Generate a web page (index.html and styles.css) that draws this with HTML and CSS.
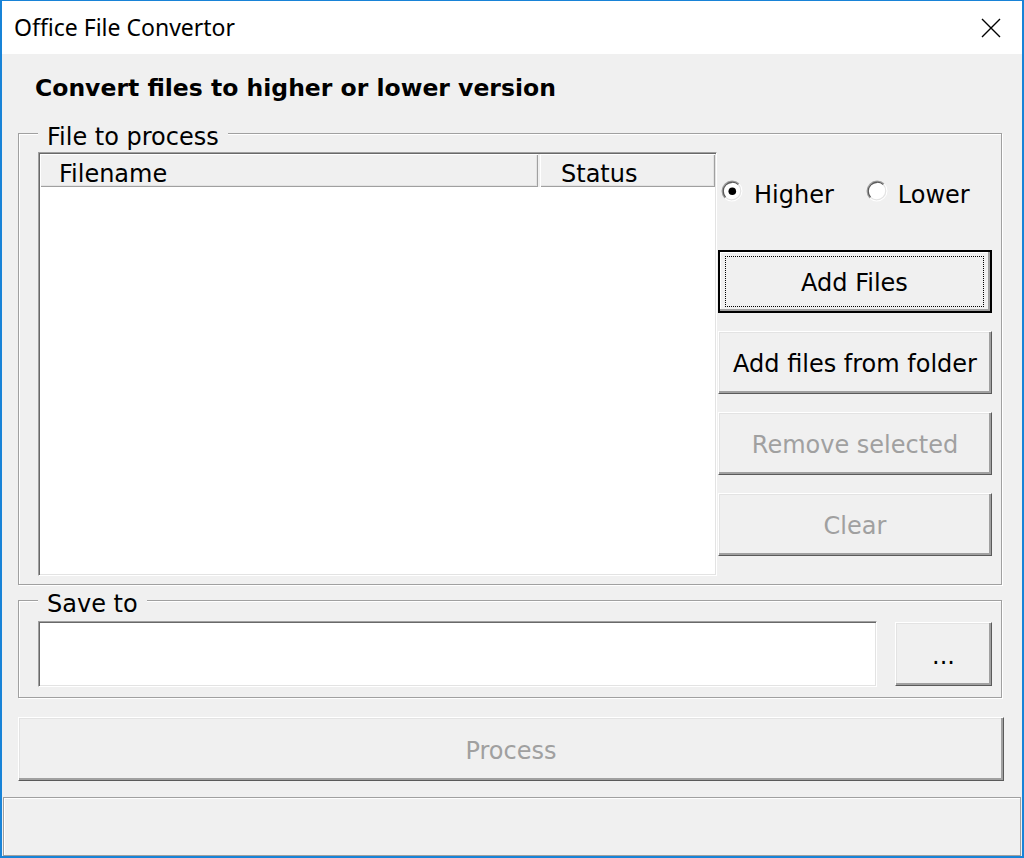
FILE: index.html
```html
<!DOCTYPE html>
<html lang="en">
<head>
<meta charset="utf-8">
<title>Office File Convertor</title>
<link rel="stylesheet" href="styles.css">
</head>
<body>
<div class="window">
  <div class="titlebar">
    <span class="title">Office File Convertor</span>
    <svg class="close" viewBox="0 0 20 20"><path d="M1 1 L19 19 M19 1 L1 19" stroke="#000" stroke-width="1.4" fill="none"/></svg>
  </div>
  <div class="content">
    <div class="heading">Convert files to higher or lower version</div>

    <div class="group group-files">
      <div class="legend">File to process</div>
      <div class="row row-files">
        <div class="list">
          <div class="list-header">
            <div class="hcell hcell-name">Filename</div>
            <div class="hcell hcell-status">Status</div>
          </div>
          <div class="list-body"></div>
        </div>
        <div class="side">
          <div class="radios">
            <div class="radio radio-higher">
              <svg viewBox="0 0 22 22">
                <circle cx="11" cy="11" r="9.5" fill="#fff"/>
                <path d="M3.93 18.07 A10 10 0 0 1 18.07 3.93" stroke="#a0a0a0" stroke-width="1.2" fill="none"/>
                <path d="M18.07 3.93 A10 10 0 0 1 3.93 18.07" stroke="#ffffff" stroke-width="1.2" fill="none"/>
                <path d="M4.64 17.36 A9 9 0 0 1 17.36 4.64" stroke="#5a5a5a" stroke-width="1.3" fill="none"/>
                <path d="M17.36 4.64 A9 9 0 0 1 4.64 17.36" stroke="#e3e3e3" stroke-width="1.2" fill="none"/>
                <circle cx="11.3" cy="11.3" r="3.8" fill="#000"/>
              </svg>
              <span class="radio-label">Higher</span>
            </div>
            <div class="radio radio-lower">
              <svg viewBox="0 0 22 22">
                <circle cx="11" cy="11" r="9.5" fill="#fff"/>
                <path d="M3.93 18.07 A10 10 0 0 1 18.07 3.93" stroke="#a0a0a0" stroke-width="1.2" fill="none"/>
                <path d="M18.07 3.93 A10 10 0 0 1 3.93 18.07" stroke="#ffffff" stroke-width="1.2" fill="none"/>
                <path d="M4.64 17.36 A9 9 0 0 1 17.36 4.64" stroke="#5a5a5a" stroke-width="1.3" fill="none"/>
                <path d="M17.36 4.64 A9 9 0 0 1 4.64 17.36" stroke="#e3e3e3" stroke-width="1.2" fill="none"/>
              </svg>
              <span class="radio-label">Lower</span>
            </div>
          </div>
          <button class="btn btn-default"><span class="focus">Add Files</span></button>
          <button class="btn">Add files from folder</button>
          <button class="btn disabled">Remove selected</button>
          <button class="btn disabled">Clear</button>
        </div>
      </div>
    </div>

    <div class="group group-save">
      <div class="legend">Save to</div>
      <div class="row row-save">
        <div class="input"></div>
        <button class="btn btn-browse">...</button>
      </div>
    </div>

    <button class="btn btn-process disabled">Process</button>

    <div class="statusbar"></div>
  </div>
</div>
</body>
</html>
```

FILE: styles.css
```css
* { box-sizing: border-box; }
html, body { margin: 0; padding: 0; }
body {
  width: 1024px;
  height: 858px;
  overflow: hidden;
  background: #fff;
  font-family: "DejaVu Sans", Verdana, sans-serif;
  font-size: 24px;
  color: #000;
}
.window {
  width: 1024px;
  height: 858px;
  border-style: solid;
  border-color: #1883d7;
  border-width: 1px 2px 2px 2px;
  display: flex;
  flex-direction: column;
  background: #f0f0f0;
}
.titlebar {
  height: 53px;
  flex: none;
  background: #fff;
  display: flex;
  align-items: center;
  justify-content: space-between;
  padding: 0 21px 0 12px;
}
.title {
  font-family: "Noto Sans", "Open Sans", sans-serif;
  font-size: 23px;
  line-height: 31px;
}
.close { width: 20px; height: 20px; display: block; }
.content {
  flex: 1;
  display: flex;
  flex-direction: column;
}
.heading {
  margin: 20px 0 0 33px;
  font-weight: bold;
  font-size: 23.5px;
  line-height: 28px;
}
.group {
  flex: none;
  margin-left: 16px;
  width: 984px;
  border: 1px solid #a0a0a0;
  box-shadow: 1px 1px 0 #fff, inset 1px 1px 0 #fff;
  display: flex;
  flex-direction: column;
}
.group-files {
  margin-top: 31px;
  height: 452px;
  padding: 0 9px 8px 19px;
}
.group-save {
  margin-top: 15px;
  height: 98px;
  padding: 0 9px 10px 19px;
}
.legend {
  align-self: flex-start;
  margin-top: -11px;
  padding: 0 9px;
  background: #f0f0f0;
  line-height: 28px;
}
.row { display: flex; align-items: flex-start; }
.row-files { margin-top: 1px; }
.row-save { margin-top: 3px; }

.list {
  width: 679px;
  height: 424px;
  border: 1px solid;
  border-color: #a0a0a0 #fff #fff #a0a0a0;
  box-shadow: inset 1px 1px 0 #696969, inset -1px -1px 0 #e3e3e3;
  background: #fff;
  padding: 1px;
  display: flex;
  flex-direction: column;
}
.list-header {
  display: flex;
  height: 33px;
  flex: none;
  background: #f0f0f0;
}
.hcell {
  background: #f0f0f0;
  box-shadow: inset 1px 1px 0 #fff, inset -1px -1px 0 #a0a0a0, inset -2px -2px 0 #e3e3e3;
  line-height: 28px;
  padding: 6px 0 0 19px;
}
.hcell-name { width: 498px; margin-right: 2px; }
.hcell-status { flex: 1; padding-left: 21px; }
.list-body { flex: 1; background: #fff; }

.side {
  margin-left: 1px;
  width: 274px;
  display: flex;
  flex-direction: column;
}
.radios {
  margin-top: 29px;
  height: 28px;
  display: flex;
  align-items: flex-start;
  line-height: 28px;
}
.radio { display: flex; align-items: flex-start; }
.radio svg { width: 22px; height: 22px; flex: none; display: block; margin-top: -1px; }
.radio-higher { margin-left: 3px; }
.radio-higher .radio-label { margin-left: 11px; }
.radio-lower { margin-left: 32px; }
.radio-lower .radio-label { margin-left: 10px; }

.btn {
  appearance: none;
  margin: 18px 0 0 0;
  height: 63px;
  width: 100%;
  display: flex;
  align-items: center;
  justify-content: center;
  background: #f0f0f0;
  border: 1px solid;
  border-color: #fff #5a5a5a #5a5a5a #fff;
  box-shadow: inset -2px -2px 0 #a0a0a0, inset 1px 1px 0 #e3e3e3;
  font-family: inherit;
  font-size: 24px;
  line-height: 28px;
  color: #000;
  padding: 3px 0 0 0;
  border-radius: 0;
}
.btn.disabled { color: #a0a0a0; }
.btn-default {
  margin-top: 41px;
  border: 2px solid #000;
  box-shadow: inset -2px -2px 0 #a0a0a0, inset 1px 1px 0 #fff;
  padding: 4px 6px 4px 5px;
  align-items: stretch;
}
.focus {
  flex: 1;
  border: 1px dotted #000;
  display: flex;
  align-items: center;
  justify-content: center;
  padding-top: 3px;
}

.input {
  width: 839px;
  height: 66px;
  background: #fff;
  border: 1px solid;
  border-color: #a0a0a0 #fff #fff #a0a0a0;
  box-shadow: inset 1px 1px 0 #696969, inset -1px -1px 0 #e3e3e3;
}
.btn-browse {
  margin: 1px 0 0 18px;
  width: 97px;
  height: 64px;
}
.btn-process {
  flex: none;
  margin: 19px 0 0 16px;
  width: 986px;
  height: 64px;
}
.statusbar {
  flex: none;
  margin: 16px 1px 0 1px;
  height: 59px;
  border: 1px solid #a0a0a0;
  box-shadow: inset 1px 1px 0 #fff;
}
```
